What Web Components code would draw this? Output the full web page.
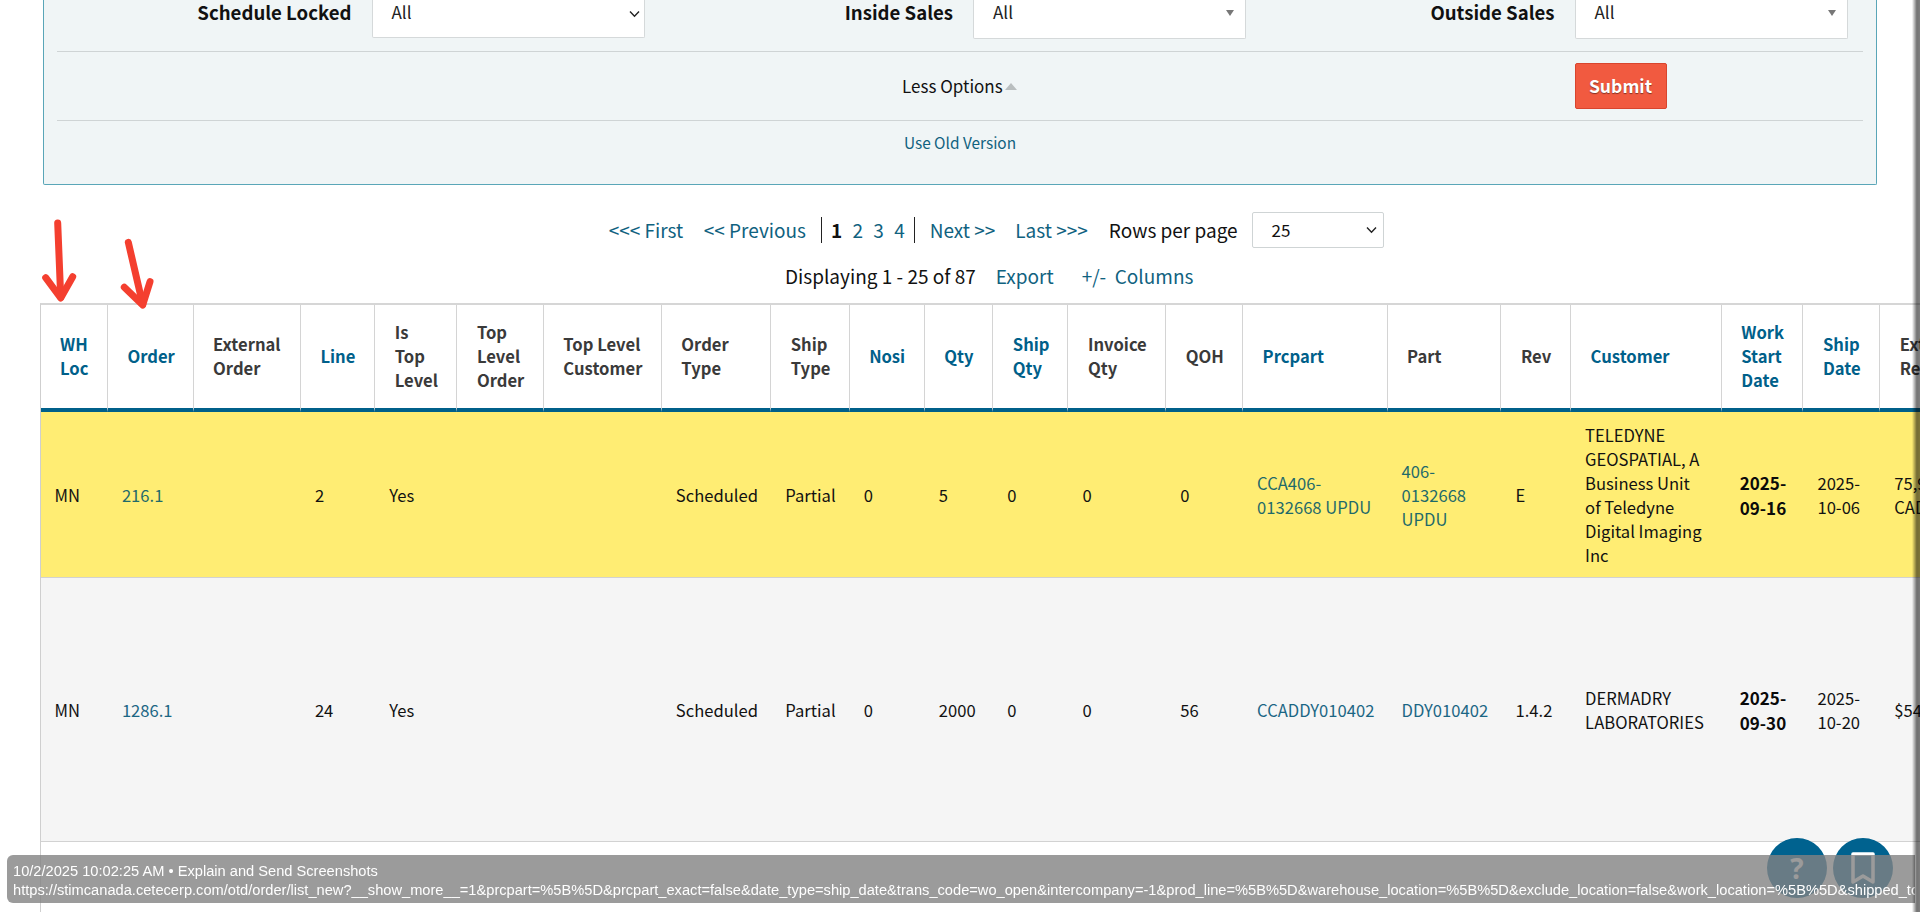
<!DOCTYPE html>
<html><head><meta charset="utf-8"><style>
html,body{margin:0;height:912px;overflow:hidden;background:#fff;}
body{font:19px/24px "Noto Sans CJK SC","Noto Sans CJK JP","Open Sans",sans-serif;color:#111;position:relative;}
</style></head><body>
<filter-panel></filter-panel>
<pager-bar></pager-bar>
<order-table></order-table>
<red-arrow style="left:40px;top:218px" data-d="M17.7 5 L20.7 79" data-w="M5.7 59.7 L20.7 80 L32.7 58.7"></red-arrow>
<red-arrow style="left:116px;top:236px" data-d="M12.3 6.3 L26.7 68.3" data-w="M8.3 51.3 L26.7 69 L34 45.7"></red-arrow>
<float-btn style="left:1767px" data-kind="help"></float-btn>
<float-btn style="left:1833px" data-kind="mark"></float-btn>
<capture-bar></capture-bar>
<edge-shade></edge-shade>
<script>
const L='#10627f';
function def(n,html){customElements.define(n,class extends HTMLElement{connectedCallback(){if(this.shadowRoot)return;const s=this.attachShadow({mode:'open'});s.innerHTML=typeof html==='function'?html(this):html;}});}
def('filter-select',el=>{const t=el.dataset.k==='tri';return `<style>
:host{display:flex;box-sizing:border-box;height:${t?39:38}px;background:#fff;border:1px solid #d5d9da;border-top:0;border-radius:0 0 2px 2px;align-items:flex-start;justify-content:space-between;padding:0 ${t?11:4}px 0 19px;font-size:17px;color:#222;line-height:24px}
svg{display:block;margin-top:10px}
span{display:block;margin-top:0}
</style><span>All</span>${t?'<svg width="8" height="6" viewBox="0 0 8 6"><path d="M0 0H8L4 6Z" fill="#777"/></svg>':'<svg width="11" height="8" viewBox="0 0 11 8"><path d="M1 1.5 5.5 6.2 10 1.5" fill="none" stroke="#222" stroke-width="1.4"/></svg>'}`});
def('filter-panel',`<style>
:host{display:block;box-sizing:border-box;width:1834px;height:185px;margin-left:43px;background:#f0f5f6;border:1.5px solid #5aa6b8;border-top:0;border-radius:0 0 2px 2px;padding:0 13px;font-weight:400}
.g{display:grid;grid-template-columns:314.5px 273px 328.5px 273px 328.5px 273px;}
.row1{height:51px;border-bottom:1.5px solid #cfd4d5;box-sizing:content-box;align-items:start}
.lab{font-weight:700;text-align:right;padding-right:20px;line-height:24px;font-size:18.6px;color:#111}
.row2{height:68px;border-bottom:1.5px solid #cfd4d5;align-items:center}
.less{grid-column:1/5;padding-left:845px;font-size:17px;color:#111;display:flex;align-items:center;gap:2px}
.btn{grid-column:6;justify-self:start;box-sizing:border-box;width:92px;height:46px;background:#f15a40;border:1px solid #d8452e;border-radius:2px;color:#fff;font-weight:700;font-size:17.6px;line-height:44px;text-align:center;text-shadow:0 1px 1px rgba(0,0,0,.45)}
.old{text-align:center;color:${L};font-size:15.4px;line-height:42px}
</style>
<div class="g row1"><div class="lab">Schedule Locked</div><filter-select></filter-select><div class="lab">Inside Sales</div><filter-select data-k="tri"></filter-select><div class="lab">Outside Sales</div><filter-select data-k="tri"></filter-select></div>
<div class="g row2"><div class="less">Less Options<svg width="12" height="7" viewBox="0 0 12 7"><path d="M0 7 6 0 12 7Z" fill="#b9bebf"/></svg></div><div class="btn">Submit</div></div>
<div class="old">Use Old Version</div>`);
def('pager-bar',`<style>
:host{display:block;height:118px;box-sizing:border-box;font-size:19px;color:#111;padding-top:27px}
.r{display:flex;align-items:center;white-space:nowrap}
.r1{height:36px;padding-left:608.7px}
.r2{height:36px;margin-top:10px;padding-left:785px}
a{color:${L}}
.sel{box-sizing:border-box;width:132.5px;height:36px;background:#fff;border:1px solid #cfd4d5;border-radius:2px;display:flex;align-items:center;justify-content:space-between;padding:0 6px 0 19px;font-size:17px;margin-left:14px}
.bar{display:inline-block;width:1px;height:26px;background:#222}
</style>
<div class="r r1"><a>&lt;&lt;&lt; First</a><a style="margin-left:20.5px">&lt;&lt; Previous</a><span class="bar" style="margin-left:15px"></span><b style="margin-left:9px">1</b><a style="margin-left:10.3px">2</a><a style="margin-left:10.3px">3</a><a style="margin-left:10.3px">4</a><span class="bar" style="margin-left:9px"></span><a style="margin-left:15px">Next &gt;&gt;</a><a style="margin-left:20px">Last &gt;&gt;&gt;</a><span style="margin-left:21px">Rows per page</span><div class="sel">25<svg width="11" height="8" viewBox="0 0 11 8"><path d="M1 1.5 5.5 6.2 10 1.5" fill="none" stroke="#222" stroke-width="1.4"/></svg></div></div>
<div class="r r2"><span>Displaying 1 - 25 of 87</span><a style="margin-left:20px">Export</a><a style="margin-left:28px">+/-&nbsp;&nbsp;Columns</a></div>`);
const cols=[67.4,85.7,107.3,74.4,82.2,86.4,118,109.4,78.4,75.2,68.5,75.1,97.9,76.8,144.5,113.9,69.6,150.7,81.7,76.8,120];
const heads=[['WH<br>Loc',1],['Order',1],['External<br>Order'],['Line',1],['Is<br>Top<br>Level'],['Top<br>Level<br>Order'],['Top Level<br>Customer'],['Order<br>Type'],['Ship<br>Type'],['Nosi',1],['Qty',1],['Ship<br>Qty',1],['Invoice<br>Qty'],['QOH'],['Prcpart',1],['Part'],['Rev'],['Customer',1],['Work<br>Start<br>Date',1],['Ship<br>Date',1],['Ext<br>Resale']];
const rows=[
 {c:'y',h:166,v:['MN','<a>216.1</a>','','2','Yes','','','Scheduled','Partial','0','5','0','0','0','<a>CCA406-<br>0132668 UPDU</a>','<a>406-<br>0132668<br>UPDU</a>','E','TELEDYNE<br>GEOSPATIAL, A<br>Business Unit<br>of Teledyne<br>Digital Imaging<br>Inc','<b>2025-<br>09-16</b>','2025-<br>10-06','75,900.00<br>CAD']},
 {c:'g',h:264,v:['MN','<a>1286.1</a>','','24','Yes','','','Scheduled','Partial','0','2000','0','0','56','<a>CCADDY010402</a>','<a>DDY010402</a>','1.4.2','DERMADRY<br>LABORATORIES','<b>2025-<br>09-30</b>','2025-<br>10-20','$54,000.00']},
 {c:'w',h:80,v:Array(21).fill('')}];
def('order-table',`<style>
:host{display:block;width:1880px;margin-left:39.5px;overflow:visible;font-size:16.6px}
table{border-collapse:separate;border-spacing:0;table-layout:fixed;width:${cols.reduce((a,b)=>a+b,0)}px;border-top:2px solid #d6d6d6;border-left:1.5px solid #cfcfcf}
th{height:101px;padding:0 0 2px 19.5px;border-right:1.5px solid #d4d4d4;border-bottom:4.5px solid #00608a;font-weight:700;color:#3a3a3a;vertical-align:middle;line-height:24px;font-size:16.6px;box-sizing:content-box;text-align:left;white-space:nowrap;overflow:hidden}
th.l{color:#00608a}
td{padding:0 0 0 14px;vertical-align:middle;white-space:nowrap;overflow:hidden;line-height:24px;color:#111;border-bottom:1.5px solid #d2d2d2}
td a{color:#1b6684}
tr.y td{background:#ffed73}tr.y td a{color:#1f6a6a}
tr.g td{background:#f5f5f5}
td b{font-size:17px;position:relative;left:4px;color:#0a0a0a;display:block;line-height:25px}
</style>
<table><colgroup>${cols.map(w=>`<col style="width:${w}px">`).join('')}</colgroup>
<thead><tr>${heads.map(h=>`<th class="${h[1]?'l':''}">${h[0]}</th>`).join('')}</tr></thead>
<tbody>${rows.map(r=>`<tr class="${r.c}" style="height:${r.h}px">${r.v.map(v=>`<td>${v}</td>`).join('')}</tr>`).join('')}</tbody></table>`);
def('red-arrow',el=>`<style>:host{position:absolute;display:block;width:44px;height:90px;z-index:3}svg{display:block;overflow:visible}</style><svg width="44" height="90" viewBox="0 0 44 90"><path d="${el.dataset.d}" fill="none" stroke="#f43f2f" stroke-width="7" stroke-linecap="round"/><path d="${el.dataset.w}" fill="none" stroke="#f43f2f" stroke-width="7" stroke-linecap="round" stroke-linejoin="round"/></svg>`);
def('float-btn',el=>`<style>:host{position:fixed;top:838px;width:60px;height:60px;border-radius:50%;background:#00628f;display:flex;align-items:center;justify-content:center;z-index:4}
b{font:700 28px/60px "Open Sans",sans-serif;color:#fff}</style>${el.dataset.kind==='help'?'<b>?</b>':'<svg width="26" height="34" viewBox="0 0 26 34"><path d="M3 3H23V31L13 25 3 31Z" fill="none" stroke="#fff" stroke-width="3.5" stroke-linejoin="round"/></svg>'}`);
def('capture-bar',`<style>:host{position:fixed;left:7px;top:855px;width:1908px;height:48px;box-sizing:border-box;background:rgba(130,130,130,.8);border-radius:6px 0 0 6px;color:#fff;font:14.65px/19px "Liberation Sans",Arial,sans-serif;padding:7px 0 0 6px;overflow:hidden;white-space:nowrap;z-index:5}</style>
<div>10/2/2025 10:02:25 AM • Explain and Send Screenshots</div><div>https://stimcanada.cetecerp.com/otd/order/list_new?__show_more__=1&amp;prcpart=%5B%5D&amp;prcpart_exact=false&amp;date_type=ship_date&amp;trans_code=wo_open&amp;intercompany=-1&amp;prod_line=%5B%5D&amp;warehouse_location=%5B%5D&amp;exclude_location=false&amp;work_location=%5B%5D&amp;shipped_to</div>`);
def('edge-shade',`<style>:host{position:fixed;right:0;top:0;width:8px;height:912px;background:linear-gradient(90deg,rgba(0,0,0,0),rgba(0,0,0,.55) 60%,rgba(0,0,0,.5));z-index:6}</style>`);
</script>
</body></html>
